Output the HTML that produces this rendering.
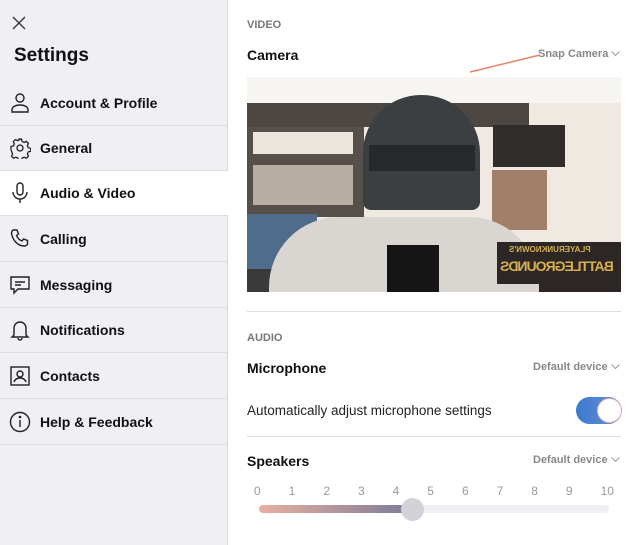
<!DOCTYPE html>
<html><head><meta charset="utf-8"><style>
*{margin:0;padding:0;box-sizing:border-box}
body{width:640px;height:545px;overflow:hidden;font-family:"Liberation Sans",sans-serif;background:#fff;position:relative;color:#111}
.side{position:absolute;left:0;top:0;width:228px;height:545px;background:#efeff4;border-right:1px solid #dcdce0}
.item{position:absolute;left:0;width:228px;height:45px;border-bottom:1px solid #dcdce2;font-weight:bold;font-size:14px}
.item span{position:absolute;left:40px;top:14px}
.item svg{position:absolute;left:9px;top:11px}
.abs{position:absolute}
.hdr{font-size:11px;font-weight:bold;color:#777;}
.lbl{font-size:14px;font-weight:bold}
.dd{font-size:11px;font-weight:bold;color:#888}
.dd svg{margin-left:3px;vertical-align:1px}
.cam div{position:absolute}
</style></head><body>
<div class="side">
<svg class="abs" style="left:12px;top:16px" width="14" height="14" viewBox="0 0 14 14" stroke="#333" stroke-width="1.3"><path d="M1 1L13 13M13 1L1 13"/></svg>
<div class="abs" style="left:14px;top:45px;font-size:19px;font-weight:bold">Settings</div>
<div class="item" style="top:81px"><svg width="22" height="22" viewBox="0 0 22 22" fill="none" stroke="#222" stroke-width="1.4"><circle cx="11" cy="6" r="4"/><path d="M3 20v-2c0-3 3-5 8-5s8 2 8 5v2z"/></svg><span>Account &amp; Profile</span></div>
<div class="item" style="top:126px"><svg width="22" height="22" viewBox="0 0 22 22" fill="none" stroke="#222" stroke-width="1.3"><circle cx="11" cy="11" r="3"/><path d="M9.5 2h3l.6 2.4 2 1 2.3-1 2 2-1 2.3.9 2 2.4.6v3l-2.4.6-.9 2 1 2.3-2 2-2.3-1-2 .9-.6 2.4h-3l-.6-2.4-2-.9-2.3 1-2-2 1-2.3-.9-2L2 12.5v-3l2.4-.6.9-2-1-2.3 2-2 2.3 1 2-1z"/></svg><span>General</span></div>
<div class="item" style="top:171px;background:#fff"><svg width="22" height="22" viewBox="0 0 22 22" fill="none" stroke="#222" stroke-width="1.4"><rect x="8" y="1" width="6" height="12" rx="3"/><path d="M4 10a7 7 0 0 0 14 0M11 17v4"/></svg><span>Audio &amp; Video</span></div>
<div class="item" style="top:217px"><svg width="22" height="22" viewBox="0 0 22 22" fill="none" stroke="#222" stroke-width="1.4"><path d="M4 2l4 0 1.5 4-2 1.5c1 2.5 3 4.5 5.5 5.5l1.5-2 4 1.5v4c-1 1-2 1.5-3 1.5C9 18 4 13 2.5 5.5 2.5 4 3 3 4 2z"/></svg><span>Calling</span></div>
<div class="item" style="top:263px"><svg width="22" height="22" viewBox="0 0 22 22" fill="none" stroke="#222" stroke-width="1.4"><path d="M2 3h18v12H9l-4 4v-4H2z"/><path d="M6 8h10M6 11h6"/></svg><span>Messaging</span></div>
<div class="item" style="top:308px"><svg width="22" height="22" viewBox="0 0 22 22" fill="none" stroke="#222" stroke-width="1.4"><path d="M5 16V9a6 6 0 0 1 12 0v7l2 2H3zM9 19a2 2 0 0 0 4 0"/></svg><span>Notifications</span></div>
<div class="item" style="top:354px"><svg width="22" height="22" viewBox="0 0 22 22" fill="none" stroke="#222" stroke-width="1.4"><rect x="2" y="2" width="18" height="18"/><circle cx="11" cy="9" r="3"/><path d="M5 17c1-3 3-4 6-4s5 1 6 4"/></svg><span>Contacts</span></div>
<div class="item" style="top:400px"><svg width="22" height="22" viewBox="0 0 22 22" fill="none" stroke="#222" stroke-width="1.4"><circle cx="11" cy="11" r="9.5"/><path d="M11 9v7"/><circle cx="11" cy="6" r=".6" fill="#222"/></svg><span>Help &amp; Feedback</span></div>
</div>

<div class="abs hdr" style="left:247px;top:19px">VIDEO</div>
<div class="abs lbl" style="left:247px;top:47px">Camera</div>
<div class="abs dd" style="left:538px;top:48px">Snap Camera<svg width="9" height="5" viewBox="0 0 9 5"><path d="M.5.5l4 4 4-4" fill="none" stroke="#999"/></svg></div>
<svg class="abs" style="left:468px;top:52px" width="75" height="22"><path d="M2 20L72 3" stroke="#e8806a" stroke-width="1.5"/></svg>

<div class="abs cam" style="left:247px;top:77px;width:374px;height:215px;background:#efe9e2;overflow:hidden">
<div style="left:0;top:0;width:374px;height:26px;background:#f7f5f2"></div>
<div style="left:0;top:26px;width:282px;height:24px;background:#4c4743"></div>
<div style="left:0;top:50px;width:117px;height:90px;background:#57504a"></div>
<div style="left:6px;top:55px;width:100px;height:22px;background:#ede6de"></div>
<div style="left:6px;top:88px;width:100px;height:40px;background:#b9aea3"></div>
<div style="left:246px;top:48px;width:72px;height:42px;background:#2f2c2a"></div>
<div style="left:245px;top:93px;width:55px;height:60px;background:#a17f68"></div>
<div style="left:0;top:137px;width:70px;height:55px;background:#4f6d8b"></div>
<div style="left:0;top:192px;width:70px;height:23px;background:#3a3a3a"></div>
<div style="left:290px;top:190px;width:84px;height:25px;background:#2c2724"></div>
<div style="left:22px;top:140px;width:270px;height:80px;background:#d9d5d1;border-radius:70px 70px 0 0"></div>
<div style="left:140px;top:168px;width:52px;height:50px;background:#151515"></div>
<div style="left:116px;top:18px;width:117px;height:115px;background:#3c3f42;border-radius:58px 58px 8px 8px"></div>
<div style="left:122px;top:68px;width:106px;height:26px;background:#26292b"></div>
<div style="left:250px;top:165px;width:124px;height:42px;background:#2c2724"></div>
<div style="left:262px;top:168px;font-size:8px;color:#d8b050;font-weight:bold;transform:scaleX(-1)">PLAYERUNKNOWN'S</div>
<div style="left:254px;top:181px;font-size:14px;color:#d8b050;font-weight:bold;letter-spacing:-1px;transform:scaleX(-1)">BATTLEGROUNDS</div>
</div>

<div class="abs" style="left:247px;top:311px;width:374px;height:1px;background:#ddd"></div>
<div class="abs hdr" style="left:247px;top:332px">AUDIO</div>
<div class="abs lbl" style="left:247px;top:360px">Microphone</div>
<div class="abs dd" style="left:533px;top:361px">Default device<svg width="9" height="5" viewBox="0 0 9 5"><path d="M.5.5l4 4 4-4" fill="none" stroke="#999"/></svg></div>
<div class="abs" style="left:247px;top:403px;font-size:13.5px;color:#222">Automatically adjust microphone settings</div>
<div class="abs" style="left:576px;top:397px;width:46px;height:27px;border-radius:14px;background:linear-gradient(90deg,#3b7ad0,#6a8fd0)"></div>
<div class="abs" style="left:597px;top:398px;width:25px;height:25px;border-radius:50%;background:#fff;border:1px solid #e4b0a8"></div>
<div class="abs" style="left:247px;top:436px;width:374px;height:1px;background:#ddd"></div>
<div class="abs lbl" style="left:247px;top:453px">Speakers</div>
<div class="abs dd" style="left:533px;top:454px">Default device<svg width="9" height="5" viewBox="0 0 9 5"><path d="M.5.5l4 4 4-4" fill="none" stroke="#999"/></svg></div>
<div class="abs" style="left:254px;top:484px;width:360px;font-size:12px;color:#999;display:flex;justify-content:space-between"><span>0</span><span>1</span><span>2</span><span>3</span><span>4</span><span>5</span><span>6</span><span>7</span><span>8</span><span>9</span><span>10</span></div>
<div class="abs" style="left:259px;top:505px;width:350px;height:8px;border-radius:4px;background:#efeff4"></div>
<div class="abs" style="left:259px;top:505px;width:155px;height:8px;border-radius:4px;background:linear-gradient(90deg,#e8b0a0,#7a7a98)"></div>
<div class="abs" style="left:401px;top:498px;width:23px;height:23px;border-radius:50%;background:#d2d3d8"></div>
</body></html>
